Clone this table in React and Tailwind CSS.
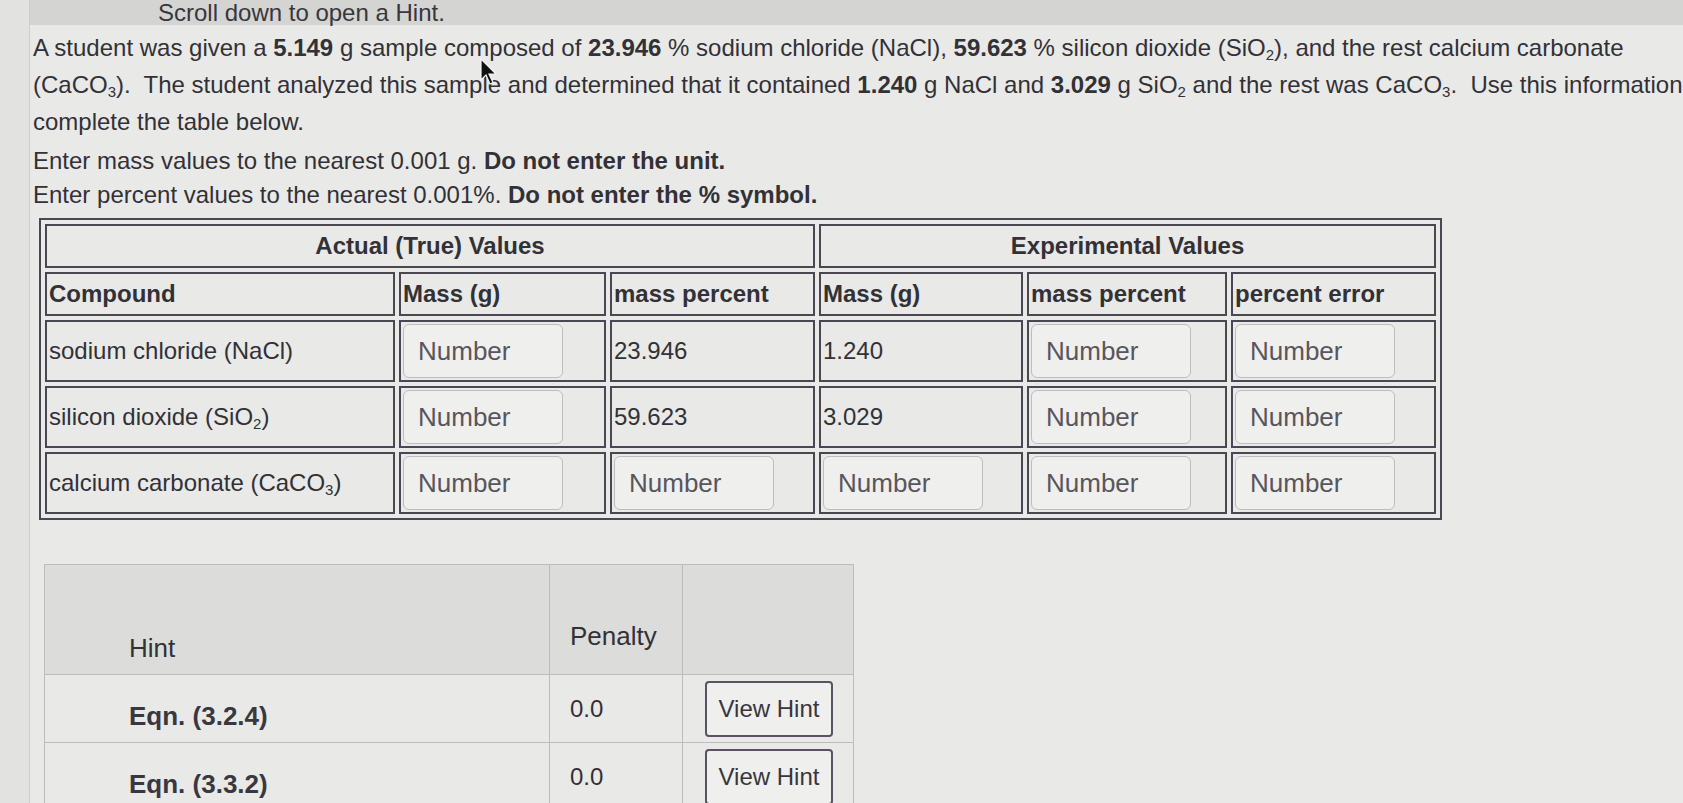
import React from "react";

const Num = () => (
  <input
    type="text"
    placeholder="Number"
    className="h-[54px] w-[160px] rounded-[6px] border-[1.5px] border-[#bdbdbd] bg-[#efefee] pl-[14px] text-[26px] text-[#333] placeholder:text-[#58565c] outline-none"
  />
);

const Cell = ({ children, className = "", ...rest }) => (
  <td {...rest} className={`border-2 border-[#4a4654] px-[2px] py-[2px] align-middle ${className}`}>
    {children}
  </td>
);

const rows = [
  { name: <>sodium chloride (NaCl)</>, pct: "23.946", exp: "1.240" },
  { name: <>silicon dioxide (SiO<sub className="text-[15px]">2</sub>)</>, pct: "59.623", exp: "3.029" },
  { name: <>calcium carbonate (CaCO<sub className="text-[15px]">3</sub>)</>, pct: null, exp: null },
];

const App = () => {
  return (
    <div className="h-screen w-full overflow-hidden bg-[#e9e9e8] flex font-['Liberation_Sans',Arial,sans-serif] text-[#323136]">
      <div className="w-[30px] shrink-0 bg-[#e2e2e1] border-r border-[#cdcdcd]" />

      <div className="flex-1 relative">
        {/* top hint bar */}
        <div className="h-[25px] bg-[#d4d4d3] pl-[128px] text-[24px] leading-[25px] text-[#38373c]">
          Scroll down to open a Hint.
        </div>

        {/* question text */}
        <div className="pl-[3px] pt-[4px] text-[24px] leading-[37px] whitespace-nowrap">
          <p>
            A student was given a <b>5.149</b> g sample composed of <b>23.946</b> % sodium chloride (NaCl), <b>59.623</b> % silicon dioxide (SiO<sub className="text-[15px]">2</sub>), and the rest calcium carbonate
          </p>
          <p>
            (CaCO<sub className="text-[15px]">3</sub>).&nbsp; The student analyzed this sample and determined that it contained <b>1.240</b> g NaCl and <b>3.029</b> g SiO<sub className="text-[15px]">2</sub> and the rest was CaCO<sub className="text-[15px]">3</sub>.&nbsp; Use this information
          </p>
          <p>complete the table below.</p>
          <div className="mt-[4px] leading-[34px]">
            <p>
              Enter mass values to the nearest 0.001 g. <b>Do not enter the unit.</b>
            </p>
            <p>
              Enter percent values to the nearest 0.001%. <b>Do not enter the % symbol.</b>
            </p>
          </div>
        </div>

        {/* mouse pointer */}
        <svg className="absolute left-[450px] top-[58px]" width="18" height="28" viewBox="0 0 18 28">
          <path d="M1 1 L1 22 L6 17 L10 26 L13 24.5 L9 16 L16 16 Z" fill="#111" stroke="#f4f4f4" strokeWidth="1.2" />
        </svg>

        {/* values table */}
        <table className="ml-[9px] mt-[6px] w-[1398px] table-fixed border-separate border-spacing-[4px] border-2 border-[#4a4654] text-[24px]">
          <colgroup>
            <col className="w-[350px]" />
            <col className="w-[207px]" />
            <col className="w-[205px]" />
            <col className="w-[204px]" />
            <col className="w-[200px]" />
            <col className="w-[205px]" />
          </colgroup>
          <thead>
            <tr className="h-[38px] font-bold">
              <Cell className="text-center" colSpan={3}>
                Actual (True) Values
              </Cell>
              <Cell className="text-center" colSpan={3}>
                Experimental Values
              </Cell>
            </tr>
            <tr className="h-[40px] font-bold text-left">
              <Cell>Compound</Cell>
              <Cell>Mass (g)</Cell>
              <Cell>mass percent</Cell>
              <Cell>Mass (g)</Cell>
              <Cell>mass percent</Cell>
              <Cell>percent error</Cell>
            </tr>
          </thead>
          <tbody>
            {rows.map((r, i) => (
              <tr key={i} className="h-[60px]">
                <Cell>{r.name}</Cell>
                <Cell>
                  <Num />
                </Cell>
                <Cell>{r.pct ? r.pct : <Num />}</Cell>
                <Cell>{r.exp ? r.exp : <Num />}</Cell>
                <Cell>
                  <Num />
                </Cell>
                <Cell>
                  <Num />
                </Cell>
              </tr>
            ))}
          </tbody>
        </table>

        {/* hints table */}
        <table className="ml-[14px] mt-[44px] w-[809px] table-fixed border-collapse text-[26px]">
          <colgroup>
            <col className="w-[505px]" />
            <col className="w-[133px]" />
            <col className="w-[171px]" />
          </colgroup>
          <thead>
            <tr className="h-[110px] bg-[#dcdcdb]">
              <th className="border border-[#bcbcbc] pl-[84px] pb-[6px] align-bottom text-left font-normal">Hint</th>
              <th className="border border-[#bcbcbc] pl-[20px] pb-[18px] align-bottom text-left font-normal">Penalty</th>
              <th className="border border-[#bcbcbc]" />
            </tr>
          </thead>
          <tbody>
            {["Eqn. (3.2.4)", "Eqn. (3.3.2)"].map((h) => (
              <tr key={h} className="h-[68px]">
                <td className="border border-[#bcbcbc] pl-[84px] pt-[16px] font-bold text-[#3a383f]">{h}</td>
                <td className="border border-[#bcbcbc] pl-[20px] text-[24px]">0.0</td>
                <td className="border border-[#bcbcbc] pl-[22px] py-[4px]">
                  <button className="h-[56px] w-[128px] rounded-[4px] border-2 border-[#5a5262] bg-[#efefee] text-[24px] text-[#38363d]">
                    View Hint
                  </button>
                </td>
              </tr>
            ))}
          </tbody>
        </table>
      </div>
    </div>
  );
};

export default App;
